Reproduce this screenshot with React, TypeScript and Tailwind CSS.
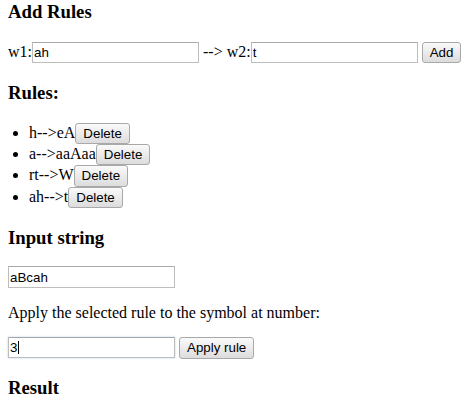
import React from "react";

const inputCls =
  "block w-[167px] h-[21.33px] border border-[#bdbdbd] border-t-[#a9a9a9] bg-white px-[1px] text-[13.33px] leading-[15.33px] text-black font-['Liberation_Sans',Arial,sans-serif] outline-none";

const btnCls =
  "inline-block h-[21.33px] border border-[#a9a9a9] rounded-[3px] bg-gradient-to-b from-[#fafafa] to-[#dcdcdc] px-[7px] text-[13.33px] leading-[15.33px] text-black font-['Liberation_Sans',Arial,sans-serif] align-baseline";

const h3Cls = "text-[18.72px] font-bold leading-[21.5px]";

export default function App() {
  const rules = [
    { w1: "h", w2: "eA" },
    { w1: "a", w2: "aaAaa" },
    { w1: "rt", w2: "W" },
    { w1: "ah", w2: "t" },
  ];
  return (
    <div className="min-h-[417px] bg-white px-2 pt-[1px] text-[16px] leading-[18.4px] text-black font-['Liberation_Serif','Times_New_Roman',serif]">
      <h3 className={h3Cls}>Add Rules</h3>
      <div className="mt-[19.5px] flex items-baseline">
        <span>w1:</span>
        <input className={inputCls} defaultValue="ah" readOnly />
        <span className="whitespace-pre"> {"-->"} w2:</span>
        <input className={inputCls} defaultValue="t" readOnly />
        <button className={btnCls + " ml-[4px]"}>Add</button>
      </div>

      <h3 className={h3Cls + " mt-[18.6px]"}>Rules:</h3>
      <ul className="mt-[19px] list-disc pl-[21px]">
        {rules.map((r, i) => (
          <li key={i}>
            {r.w1}
            {"-->"}
            {r.w2}
            <button className={btnCls}>Delete</button>
          </li>
        ))}
      </ul>

      <h3 className={h3Cls + " mt-[19px]"}>Input string</h3>
      <input className={inputCls + " mt-[18px]"} defaultValue="aBcah" readOnly />

      <p className="mt-[16px]">Apply the selected rule to the symbol at number:</p>
      <div className="mt-[15px] flex items-baseline">
        <div className="relative">
          <input
            className={inputCls + " border-[#79a4e2] border-t-[#79a4e2] shadow-[0_0_2px_#b4cff2]"}
            defaultValue="3"
            readOnly
          />
          <span className="absolute left-[9.5px] top-[4px] h-[13px] w-[1px] bg-black" />
        </div>
        <button className={btnCls + " ml-[4px]"}>Apply rule</button>
      </div>

      <h3 className={h3Cls + " mt-[18.3px]"}>Result</h3>
    </div>
  );
}
